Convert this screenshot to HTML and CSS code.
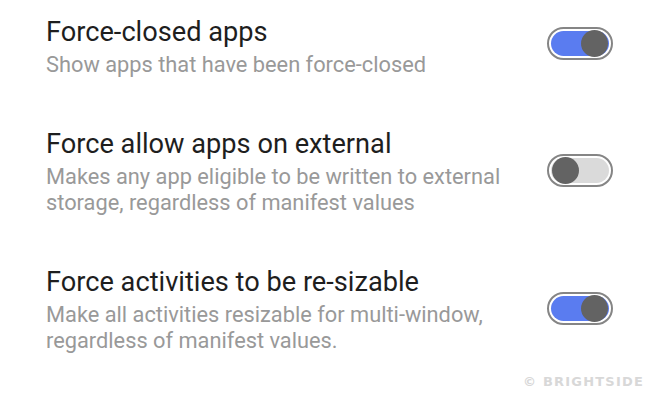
FILE: index.html
```html
<!DOCTYPE html>
<html>
<head>
<meta charset="utf-8">
<link rel="stylesheet" href="styles.css">
</head>
<body>
<div class="list">
  <div class="row">
    <div class="text">
      <div class="title">Force-closed apps</div>
      <div class="sub">Show apps that have been force-closed</div>
    </div>
    <div class="toggle on first"><div class="fill"><div class="knob"></div></div></div>
  </div>
  <div class="row">
    <div class="text">
      <div class="title">Force allow apps on external</div>
      <div class="sub">Makes any app eligible to be written to external<br>storage, regardless of manifest values</div>
    </div>
    <div class="toggle off"><div class="fill"><div class="knob"></div></div></div>
  </div>
  <div class="row">
    <div class="text">
      <div class="title">Force activities to be re-sizable</div>
      <div class="sub">Make all activities resizable for multi-window,<br>regardless of manifest values.</div>
    </div>
    <div class="toggle on"><div class="fill"><div class="knob"></div></div></div>
  </div>
</div>
<div class="watermark">© BRIGHTSIDE</div>
</body>
</html>
```
FILE: styles.css
```css
html, body {
  margin: 0;
  padding: 0;
  background: #ffffff;
  width: 650px;
  height: 402px;
  overflow: hidden;
  font-family: Roboto, "Noto Sans", sans-serif;
}
body { position: relative; }
.list {
  display: flex;
  flex-direction: column;
  gap: 46px;
  padding: 12px 37px 0 46px;
}
.row {
  display: flex;
  align-items: center;
  justify-content: space-between;
}
.title {
  font-size: 27.2px;
  line-height: 40px;
  color: #1e1e1e;
}
.sub {
  font-size: 21.8px;
  line-height: 26px;
  color: #999999;
}
.toggle {
  width: 58px;
  height: 25px;
  border: 2px solid #858585;
  border-radius: 17px;
  padding: 2px;
  box-sizing: content-box;
  background: #fff;
  flex: none;
}
.toggle.first { margin-bottom: 3px; }
.fill {
  height: 100%;
  border-radius: 13px;
  display: flex;
  align-items: center;
}
.on .fill { background: #5a7cf0; justify-content: flex-end; }
.off .fill { background: #dadada; justify-content: flex-start; }
.knob {
  width: 27px;
  height: 27px;
  border-radius: 50%;
  background: #636363;
  flex: none;
}
.on .knob { margin-right: 1px; }
.off .knob { margin-left: 1px; }
.watermark {
  position: absolute;
  right: 6px;
  bottom: 13px;
  font-family: "DejaVu Sans", sans-serif;
  font-weight: bold;
  font-size: 13px;
  letter-spacing: 1.2px;
  color: #d8d8d8;
}
```
